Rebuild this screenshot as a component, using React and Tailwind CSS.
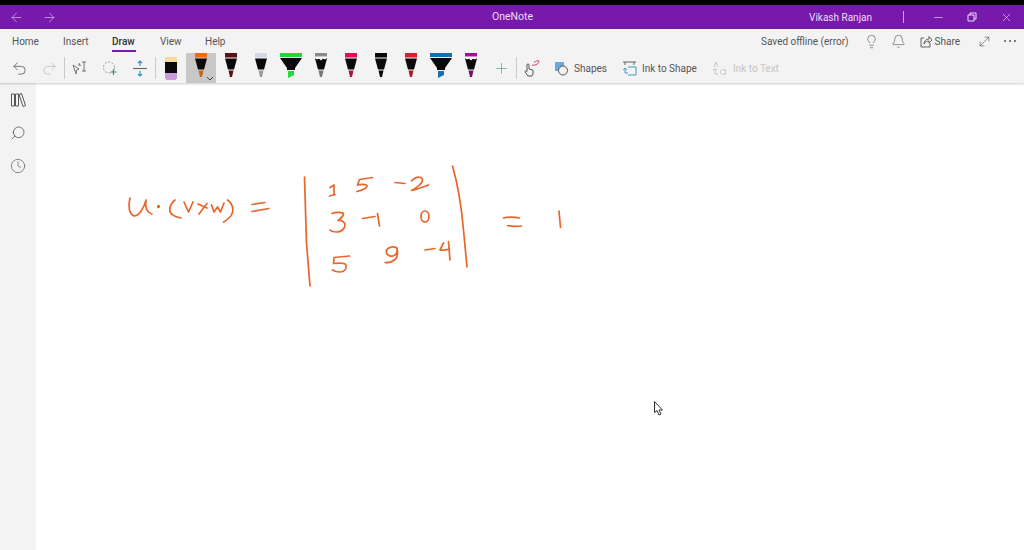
import { ArrowLeft, ArrowRight, Bell, Lightbulb, Minus, MoveDiagonal, Plus, Redo2, Search, Undo2, X, Clock } from 'lucide-react'

const tabs = [
  { label: 'Home', className: 'ml-3 w-[51px]' },
  { label: 'Insert', className: 'w-[49px]' },
  { label: 'Draw', className: 'w-[48px]', active: true },
  { label: 'View', className: 'w-[45px]' },
  { label: 'Help', className: 'w-[40px]' },
]

const pens = [
  { cap: '#5e1010', body: '#0a0a0a', tip: '#5e1010' },
  { cap: '#d3d6e4', body: '#0a0a0a', tip: '#9a9a9a' },
  { cap: '#22d83a', body: '#0a0a0a', tip: '#22d83a', wide: true },
  { cap: '#8a8a8a', body: '#0a0a0a', tip: '#777777', jag: true },
  { cap: '#e0104f', body: '#0a0a0a', tip: '#a81245' },
  { cap: '#0a0a0a', body: '#0a0a0a', tip: '#0a0a0a' },
  { cap: '#d8202c', body: '#0a0a0a', tip: '#a81e28' },
  { cap: '#1470b0', body: '#0a0a0a', tip: '#1470b0', wide: true },
  { cap: '#a010a0', body: '#0a0a0a', tip: '#70106a', jag: true },
]

// one pen in the ink gallery, drawn in a 30x30 box
const Pen = ({ cap, body, tip, wide, jag }) => {
  if (wide) {
    return (
      <svg width="30" height="30" viewBox="0 0 30 30">
        <rect x="4" y="0" width="22" height="4" fill={cap} />
        <path d="M4 5h22l-7 10v2h-8v-2z" fill={body} />
        <path d="M12 18h6v4l-6 3z" fill={tip} />
      </svg>
    )
  }
  return (
    <svg width="30" height="30" viewBox="0 0 30 30">
      <rect x="9" y="0" width="12" height="4.500" fill={cap} />
      <path d="M9 5.500h12l-3 11h-6z" fill={body} />
      {jag ? <path d="M9 4.500l2 2 2-1 2 2 2-2 2 1 2-2v-1H9z" fill="#fff" /> : null}
      <path d="M12.500 17.500h5l-1.500 6.500h-2z" fill={tip} />
    </svg>
  )
}

const IconButton = ({ children, className = '' }) => (
  <div className={`flex h-[30px] w-[30px] shrink-0 items-center justify-center ${className}`}>{children}</div>
)

const Divider = () => <div className="h-[22px] w-px shrink-0 bg-[#c9c9c9]" />

const Ink = () => (
  <svg
    className="pointer-events-none absolute left-0 top-0"
    width="1024"
    height="550"
    viewBox="0 0 1024 550"
    fill="none"
    stroke="#e8662a"
    strokeWidth="1.700"
    strokeLinecap="round"
    strokeLinejoin="round"
  >
    {/* u . (v x w) = */}
    <path d="M130 198C128 206 129 214 134 216C139 216 144 208 146 200C145 206 146 212 152 214" />
    <circle cx="158.500" cy="206.500" r="0.800" fill="#e8662a" />
    <path d="M175 200C169 205 168 212 173 215C175 217 178 217 181 218" />
    <path d="M184 202L188.500 212L193 202" />
    <path d="M198 204L207 208M207 203.500L199 214" />
    <path d="M211.500 205L214 212L217.500 207L220.500 212L224 203" />
    <path d="M227.500 200C233 204 235 211 230 217C228 219 226 221 223.500 222" />
    <path d="M252 204.500L265 202.500M252 211.500L269 208.500" />

    {/* determinant bars */}
    <path d="M304.500 177L306.500 243L310 286" />
    <path d="M452.500 166C458 185 462 213 463.500 230L467 267" />

    {/* first column */}
    <path d="M330 187.500L334 185L334 195M329.500 196L335 194.500" />
    <path d="M332 213.500C336 212 343 212 343.500 214C343 217 340 219 338 220.500C342 220 345 222 345 225C345 229 341 232 337 232C334 232 331 231 330 230" />
    <path d="M349.500 256L334 257.500L333.500 263.500C338 263 345 263 346 265C347 269 344 272 340 272C337 272 334 271 332.500 270" />

    {/* second column */}
    <path d="M372.500 177.500L359.500 179.500L357.500 185C361 184 366 184 367 185.500C367.500 188 362 190.500 357 191.500" />
    <path d="M362.500 218.500L375 216.500M377.500 213.500L379.500 226" />
    <path d="M397 248C394 246 388 247 386.500 250C385.500 254 389 257 393 256C396 255 397.500 252 397 248C398 253 398 257 395 259.500C392 262 388 263 385 262.500" />

    {/* third column */}
    <path d="M395 182.500L405 183.500" />
    <path d="M411.500 181C414 178.500 418 176.500 420.500 177.500C423.500 178.500 423 182 420 184.500C417.500 187 414 189 411.500 190.500C417 189.500 423 187 428.500 185" />
    <ellipse cx="425" cy="216.500" rx="4" ry="5.500" />
    <path d="M425 250L435 248.500" />
    <path d="M443.500 243L440 250C443 250.500 446 250 449.500 249M448.500 241.500L450 260" />

    {/* = 1 */}
    <path d="M503.500 218C508 217 514 217 519.500 218M507.500 225.500C512 226.500 517 226.500 521.500 226" />
    <path d="M559 211L560.500 227.500" />
  </svg>
)

const App = () => {
  return (
    <div className="relative flex h-[550px] w-[1024px] flex-col overflow-hidden bg-white font-['Roboto','Liberation_Sans',sans-serif]">
      <div className="h-[5px] shrink-0 bg-black" />

      {/* title bar */}
      <div className="relative flex h-[24px] shrink-0 items-center bg-[#7719aa] text-[#eeddf5]">
        <ArrowLeft size={15} strokeWidth={1.2} className="ml-[9px] text-[#d3b4e6]" />
        <ArrowRight size={15} strokeWidth={1.2} className="ml-[18px] text-[#d3b4e6]" />
        <span className="absolute left-[492px] text-[10.5px]">OneNote</span>
        <span className="ml-auto text-[10px]">Vikash Ranjan</span>
        <div className="ml-[31px] h-[12px] w-px bg-[#c9a3df]" />
        <Minus size={13} strokeWidth={1.2} className="ml-[28px]" />
        <svg width="10" height="10" viewBox="0 0 10 10" fill="none" stroke="currentColor" strokeWidth="1" className="ml-[22px]">
          <path d="M1 3h6v6H1zM3 3V1h6v6H7" />
        </svg>
        <X size={13} strokeWidth={1.2} className="ml-[23px] mr-[11px]" />
      </div>

      {/* ribbon */}
      <div className="relative z-10 shrink-0 bg-[#f3f3f3] shadow-[0_1px_2px_rgba(0,0,0,0.2)]">
        <div className="flex h-[24px] items-center text-[10px] text-[#555555]">
          {tabs.map((tab) => (
            <div key={tab.label} className={`relative flex h-full shrink-0 items-center ${tab.className}`}>
              <span className={tab.active ? 'font-medium text-[#333333]' : ''}>{tab.label}</span>
              {tab.active && <div className="absolute left-0 top-[21px] h-[2px] w-[24px] bg-[#7719aa]" />}
            </div>
          ))}
          <span className="ml-auto">Saved offline (error)</span>
          <Lightbulb size={15} strokeWidth={1} className="ml-[15px]" />
          <Bell size={15} strokeWidth={1} className="ml-[12px]" />
          <svg width="13" height="13" viewBox="0 0 13 13" fill="none" stroke="currentColor" strokeWidth="0.900" className="ml-[14px]">
            <path d="M4 3H1v9h9V8M4 9C4 6 6 4 9 4V1.500L12 5L9 8V6C7 6 5 7 4 9z" />
          </svg>
          <span className="ml-[2px]">Share</span>
          <MoveDiagonal size={15} strokeWidth={1} className="ml-[17px]" />
          <svg width="14" height="4" viewBox="0 0 14 4" fill="currentColor" className="ml-[11px] mr-[7px]">
            <circle cx="2" cy="2" r="1" />
            <circle cx="7" cy="2" r="1" />
            <circle cx="12" cy="2" r="1" />
          </svg>
        </div>

        <div className="flex h-[30px] items-center pl-1 text-[10px] text-[#555555]">
          <IconButton><Undo2 size={17} strokeWidth={1.1} /></IconButton>
          <IconButton><Redo2 size={17} strokeWidth={1.1} className="text-[#bdbdbd]" /></IconButton>
          <Divider />
          <IconButton>
            <svg width="16" height="16" viewBox="0 0 16 16" fill="none" stroke="#666666" strokeWidth="0.900">
              <path d="M1 5l6 4-2.500 1-.5 4zM10 2h4M12 2v9M10 11h4M7 3l1.500 3M6 5h2" />
            </svg>
          </IconButton>
          <IconButton>
            <svg width="16" height="16" viewBox="0 0 16 16" fill="none" strokeWidth="1">
              <circle cx="7" cy="7.500" r="5.500" stroke="#9a9a9a" strokeDasharray="2 1.500" />
              <path d="M11.500 9v6M8.500 12h6" stroke="#2f9e5b" strokeWidth="1.200" />
            </svg>
          </IconButton>
          <IconButton>
            <svg width="14" height="17" viewBox="0 0 14 17" fill="none" strokeWidth="1.100">
              <path d="M0 8.500h14" stroke="#666666" />
              <path d="M7 1v5M5 3l2-2 2 2M7 11v5M5 14l2 2 2-2" stroke="#2d8fc9" />
            </svg>
          </IconButton>
          <Divider />
          <IconButton>
            <svg width="14" height="23" viewBox="0 0 14 23">
              <rect x="1" y="0" width="12" height="5" fill="#f3dc9c" />
              <rect x="1" y="5" width="12" height="11" fill="#0a0a0a" />
              <path d="M1 16h12v5l-1.500 2h-9L1 21z" fill="#c89ad8" />
            </svg>
          </IconButton>
          <IconButton className="relative bg-[#c8c8c8]">
            <Pen cap="#f26a10" body="#0a0a0a" tip="#c8661e" />
            <svg width="8" height="5" viewBox="0 0 8 5" fill="none" stroke="#444444" className="absolute bottom-[2px] right-[2px]">
              <path d="M1 1l3 3 3-3" />
            </svg>
          </IconButton>
          {pens.map((pen, i) => (
            <IconButton key={i}><Pen {...pen} /></IconButton>
          ))}
          <IconButton><Plus size={17} strokeWidth={0.8} className="text-[#2f9e5b]" /></IconButton>
          <Divider />
          <IconButton>
            <svg width="16" height="18" viewBox="0 0 16 18" fill="none" strokeWidth="1">
              <path d="M8 6C12 7 15 4 15 2c-2-1-3 1-5 1" stroke="#c8405a" />
              <path d="M4 17l-3-4c-.5-1 1-1.500 2-.5V6c0-1.500 2-1.500 2 0v4l4 1v4l-1 2z" stroke="#555555" />
            </svg>
          </IconButton>
          <svg width="15" height="15" viewBox="0 0 15 15" className="ml-[7px] shrink-0" fill="none">
            <path d="M1 1h9v5H6v4H1z" fill="#6aa9e0" />
            <circle cx="9" cy="9.500" r="4.500" stroke="#555555" fill="#f3f3f3" />
          </svg>
          <span className="ml-[5px] mt-px shrink-0">Shapes</span>
          <svg width="15" height="15" viewBox="0 0 15 15" className="ml-[15px] shrink-0" fill="none" stroke="#2d8fc9" strokeWidth="0.900">
            <path d="M1 1h13" stroke="#555555" />
            <path d="M3 1v3M12 1v3" stroke="#555555" />
            <path d="M6 6h8v8H6M1 9l2-2 2 2M3 7v5h3" />
          </svg>
          <span className="ml-[5px] mt-px shrink-0">Ink to Shape</span>
          <svg width="15" height="15" viewBox="0 0 15 15" className="ml-[15px] shrink-0" fill="none" stroke="#c4c4c4" strokeWidth="0.900">
            <path d="M4 1L2 6M4 1l2 5M1 9l2-1 2 1M3 8v5h3" />
            <circle cx="11" cy="11" r="2.500" />
            <path d="M13.500 8.500v5" />
          </svg>
          <span className="ml-[6px] mt-px shrink-0 text-[#c4c4c4]">Ink to Text</span>
        </div>
      </div>

      <div className="flex min-h-0 flex-1">
        {/* sidebar */}
        <div className="flex w-[36px] shrink-0 flex-col items-center gap-[17px] bg-[#f3f3f3] pt-[9px] text-[#555555]">
          <svg width="16" height="16" viewBox="0 0 16 16" fill="none" stroke="currentColor" strokeWidth="1">
            <path d="M1.500 2h3v12h-3zM5.500 2h3v12h-3zM9 2.500l2.500-1L15.500 13.500l-2.500 1z" />
          </svg>
          <Search size={16} strokeWidth={1.2} className="-scale-x-100" />
          <Clock size={16} strokeWidth={1} />
        </div>
        {/* page */}
        <div className="flex-1 bg-white" />
      </div>

      <Ink />

      {/* mouse pointer */}
      <svg className="absolute left-[654px] top-[401px]" width="10" height="15" viewBox="0 0 10 15" fill="#fff" stroke="#333333" strokeWidth="1">
        <path d="M0.500 0.500v11l2.500-2 2 4.500 2-1-2-4h3.500z" />
      </svg>
    </div>
  )
}

export default App
